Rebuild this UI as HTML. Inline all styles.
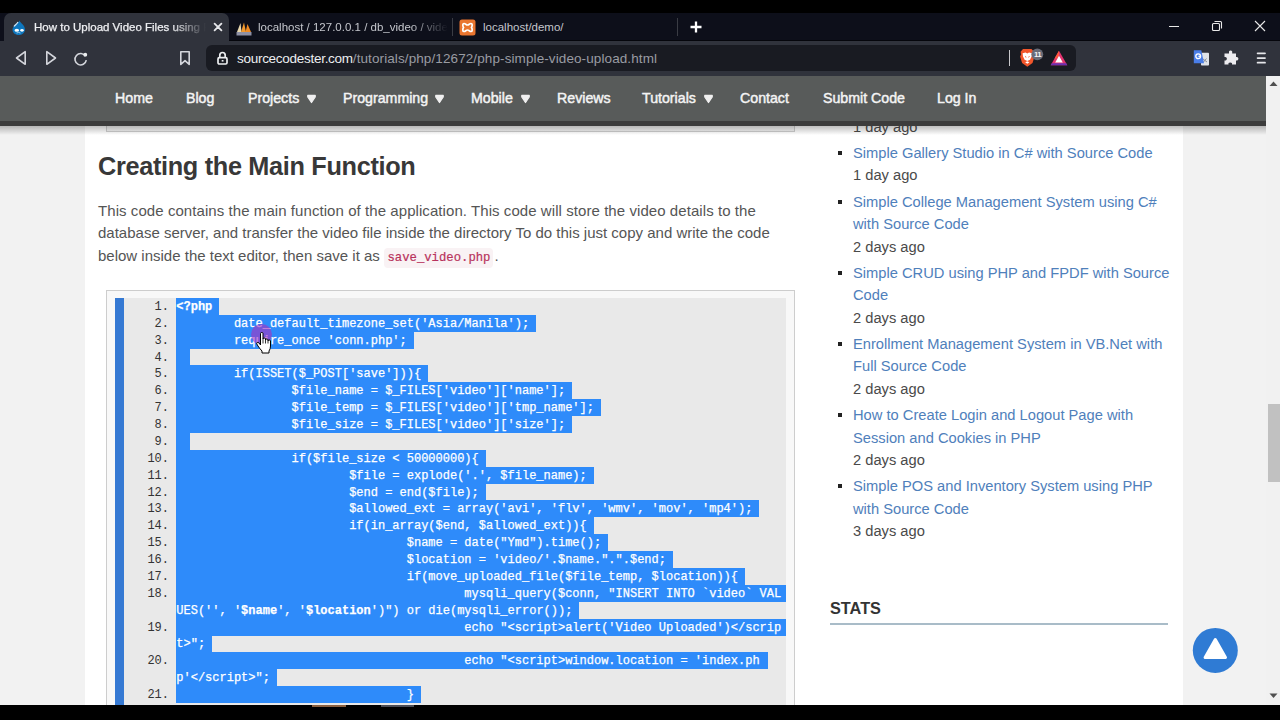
<!DOCTYPE html><html><head><meta charset="utf-8"><style>
*{margin:0;padding:0;box-sizing:border-box}
html,body{width:1280px;height:720px;overflow:hidden;background:#f2f2f2;font-family:"Liberation Sans",sans-serif}
.a{position:absolute}
.tt{font-size:11.5px;color:#eeeff2;white-space:nowrap;line-height:14px}
.fade{-webkit-mask-image:linear-gradient(90deg,#000 80%,transparent);overflow:hidden}
.ni{top:89.3px;font-size:14.2px;font-weight:normal;-webkit-text-stroke:0.45px #f4f4f4;color:#f4f4f4;white-space:nowrap;line-height:18px}
.p{font-size:15px;color:#555;white-space:nowrap;line-height:22px;left:98px}
.cl{position:absolute;left:176px;height:17px;white-space:pre;font-family:"Liberation Mono",monospace;font-size:12px;line-height:17px;color:#fff}
.cl span.h{background:#2e8bfa;display:inline-block;height:17px;padding-top:1px;vertical-align:top;-webkit-text-stroke:0.25px #fff;text-indent:0.3px}
.ln{position:absolute;left:122px;width:47px;text-align:right;height:17px;padding-top:1px;font-family:"Liberation Mono",monospace;font-size:12px;line-height:17px;color:#333}
.sl{position:absolute;left:853px;font-size:14.7px;line-height:20px;white-space:nowrap;color:#4f80bb}
.sd{position:absolute;left:853px;font-size:14.7px;line-height:20px;white-space:nowrap;color:#4a4a4a}
.bu{position:absolute;left:838px;width:4px;height:4px;background:#222}
</style></head><body>
<div class="a" style="left:0;top:0;width:1280px;height:13px;background:#000"></div>
<div class="a" style="left:0;top:13px;width:1280px;height:28px;background:#0d0f1a"></div>
<div class="a" style="left:4px;top:13px;width:225px;height:28px;background:#30333c;border-radius:7px 7px 0 0"></div>
<div class="a" style="left:0;top:41px;width:1280px;height:35px;background:#30333c"></div>
<div class="a" style="left:229px;top:40px;width:1051px;height:1px;background:#05060c"></div>
<div class="a" style="left:206px;top:45px;width:870px;height:26px;background:#191b22;border-radius:6px"></div>
<div class="a" style="left:452px;top:18px;width:1px;height:18px;background:#3a3c44"></div>
<div class="a" style="left:677px;top:18px;width:1px;height:18px;background:#3a3c44"></div>
<div class="a tt fade" style="left:34px;top:20px;width:172px;-webkit-text-stroke:0.25px #eeeff2">How to Upload Video Files using PHP</div>
<div class="a tt fade" style="left:258px;top:20px;color:#c4c6cc;width:190px">localhost / 127.0.0.1 / db_video / video</div>
<div class="a tt" style="left:483px;top:20px;color:#c4c6cc">localhost/demo/</div>
<div class="a" style="left:237px;top:51px;font-size:13.5px;color:#9a9ca2;white-space:nowrap;line-height:16px"><span style="color:#eceef0;letter-spacing:-0.28px">sourcecodester.com</span><span style="letter-spacing:0.1px">/tutorials/php/12672/php-simple-video-upload.html</span></div>
<svg class="a" style="left:10px;top:19px" width="18" height="18" viewBox="0 0 18 18"><path d="M9.5 1.5 C10 4 15 6 15 10.5 C15 14 12 16 8.5 16 C5 16 2.5 13.5 2.5 10.5 C2.5 6.5 8 5.5 9.5 1.5 Z" fill="#0d76bd"/><path d="M8 3 C7 5 5 6 4 7.5" stroke="#cfe6f7" stroke-width="1.3" fill="none"/><ellipse cx="6.8" cy="11.3" rx="2.3" ry="1.5" fill="#fff"/><ellipse cx="12" cy="11.3" rx="1.8" ry="1.4" fill="#fff"/><path d="M6.5 14 Q8.5 13 10.5 14" stroke="#9ccbeb" stroke-width="1" fill="none"/></svg>
<svg class="a" style="left:213px;top:22px" width="10" height="10" viewBox="0 0 10 10"><path d="M1.6 1.6 L8.4 8.4 M8.4 1.6 L1.6 8.4" stroke="#e6e7ea" stroke-width="1.8" stroke-linecap="round"/></svg>
<svg class="a" style="left:235px;top:19px" width="18" height="18" viewBox="0 0 18 18"><path d="M2 13 L5.5 4 L6.5 13 Z" fill="#e9d9b0"/><path d="M6 13 L9 3.5 L11 13 Z" fill="#f39a2e"/><path d="M10.5 13 L12.5 5 L16 13 Z" fill="#f08a22"/><rect x="1.5" y="13" width="15" height="3.5" fill="#8d90a6"/></svg>
<svg class="a" style="left:459px;top:19px" width="17" height="17" viewBox="0 0 17 17"><rect x="0.5" y="0.5" width="16" height="16" rx="2.5" fill="#e9752f"/><path d="M5 4.5 C6.5 4.5 7 6 8.5 6 C10 6 10.5 4.5 12 4.5 C13.5 4.5 13.5 7 12.5 8.5 C13.5 10 13.5 12.5 12 12.5 C10.5 12.5 10 11 8.5 11 C7 11 6.5 12.5 5 12.5 C3.5 12.5 3.5 10 4.5 8.5 C3.5 7 3.5 4.5 5 4.5 Z" fill="none" stroke="#fff" stroke-width="1.7"/></svg>
<svg class="a" style="left:689px;top:20px" width="14" height="14" viewBox="0 0 14 14"><path d="M7 1.5 V12.5 M1.5 7 H12.5" stroke="#fff" stroke-width="2.3"/></svg>
<div class="a" style="left:1169px;top:26px;width:10px;height:1px;background:#e8e8e8"></div>
<svg class="a" style="left:1211px;top:20px" width="12" height="12" viewBox="0 0 12 12"><rect x="1.5" y="3.5" width="7" height="7" rx="1" fill="none" stroke="#e8e8e8" stroke-width="1.1"/><path d="M3.5 1.5 H9.5 Q10.5 1.5 10.5 2.5 V8.5" fill="none" stroke="#e8e8e8" stroke-width="1.1"/></svg>
<svg class="a" style="left:1254px;top:20px" width="12" height="12" viewBox="0 0 12 12"><path d="M1 1 L11 11 M11 1 L1 11" stroke="#e8e8e8" stroke-width="1.1"/></svg>
<svg class="a" style="left:14px;top:49px" width="14" height="18" viewBox="0 0 14 18"><path d="M2.5 9 L11.2 2.7 V15.3 Z" fill="none" stroke="#d4d6dc" stroke-width="1.6" stroke-linejoin="round"/></svg>
<svg class="a" style="left:44px;top:49px" width="14" height="18" viewBox="0 0 14 18"><path d="M11.5 9 L2.8 2.7 V15.3 Z" fill="none" stroke="#d4d6dc" stroke-width="1.6" stroke-linejoin="round"/></svg>
<svg class="a" style="left:72px;top:50px" width="17" height="17" viewBox="0 0 17 17"><path d="M13.5 6.2 A5.7 5.7 0 1 0 14.3 10.2" fill="none" stroke="#d4d6dc" stroke-width="1.6"/><circle cx="13.3" cy="4.7" r="1.9" fill="#eceef0"/></svg>
<svg class="a" style="left:178px;top:49px" width="14" height="18" viewBox="0 0 14 18"><path d="M2.8 2.8 H11.2 V15.4 L7 11.6 L2.8 15.4 Z" fill="none" stroke="#d4d6dc" stroke-width="1.6" stroke-linejoin="round"/></svg>
<svg class="a" style="left:216px;top:50px" width="13" height="16" viewBox="0 0 13 16"><path d="M3.8 7.5 V5.2 A2.7 2.7 0 0 1 9.2 5.2 V7.5" fill="none" stroke="#eceef0" stroke-width="1.7"/><rect x="2" y="7.6" width="9" height="6.4" rx="1.3" fill="none" stroke="#eceef0" stroke-width="1.7"/><rect x="5.7" y="10" width="1.8" height="1.6" fill="#eceef0"/></svg>
<div class="a" style="left:1009px;top:50px;width:1px;height:16px;background:#c8c8cc"></div>
<svg class="a" style="left:1019px;top:48px" width="17" height="20" viewBox="0 0 17 20"><path d="M4 1 H12.5 L15 3.8 L14.6 6.5 L15.5 8.5 L13.5 15 L8.3 18.8 L3.1 15 L1.1 8.5 L2 6.5 L1.6 3.8 Z" fill="#f1562b"/><path d="M3.6 5.2 L6.6 4.6 L8.3 5.6 L10 4.6 L13 5.2 L12.6 8.6 L11 11.8 L8.3 13 L5.6 11.8 L4 8.6 Z" fill="#fff"/><path d="M6.2 14.2 L8.3 13.2 L10.4 14.2 L8.3 15.8 Z" fill="#fff"/><path d="M6 8.5 L7.3 9.2 M10.6 8.5 L9.3 9.2" stroke="#f1562b" stroke-width="0.9"/></svg>
<svg class="a" style="left:1031px;top:48px" width="13" height="13" viewBox="0 0 13 13"><circle cx="6.3" cy="6.3" r="5.9" fill="#6a6c78"/><text x="6.5" y="9" font-family="Liberation Sans" font-size="7.8" font-weight="bold" fill="#f4f4f4" text-anchor="middle" letter-spacing="-0.6">11</text></svg>
<svg class="a" style="left:1050px;top:50px" width="18" height="16" viewBox="0 0 18 16"><path d="M9 0.8 L17.3 15.2 H0.7 Z" fill="#e2336f"/><path d="M9 0.8 L4.5 8.6 L7 8.6 L9 5.2 Z" fill="#ff5a3c"/><path d="M9 5.8 L12.8 12.5 H5.2 Z" fill="#fff"/><path d="M0.7 15.2 H17.3 L16.2 13.3 H1.8 Z" fill="#6a2fb0"/></svg>
<svg class="a" style="left:1192px;top:49px" width="18" height="18" viewBox="0 0 18 18"><rect x="9" y="3.8" width="8" height="12.8" rx="0.8" fill="#dfe3e8"/><path d="M11 10 L15 13 M11.5 13 L14.5 9.5" stroke="#8a9099" stroke-width="1"/><path d="M1.8 1.2 H9.3 L12 14.3 H1.8 Z" fill="#4a7ee8"/><circle cx="6.2" cy="7.3" r="2.4" fill="none" stroke="#fff" stroke-width="1.3"/><path d="M6.4 7.3 H8.6" stroke="#fff" stroke-width="1.2"/></svg>
<svg class="a" style="left:1223px;top:50px" width="16" height="16" viewBox="0 0 16 16"><path d="M6 1.5 A1.8 1.8 0 0 1 9.2 1.5 V3.5 H13 V7 A1.8 1.8 0 1 1 13 10.4 V14.6 H9 A1.8 1.8 0 1 0 5.5 14.6 H1.5 V10.4 A1.8 1.8 0 1 0 1.5 7 V3.5 H6 Z" fill="#ececef"/></svg>
<svg class="a" style="left:1255px;top:51px" width="12" height="14" viewBox="0 0 12 14"><path d="M2.6 2.3 H10 M2.6 7.1 H10 M2.6 11.7 H10" stroke="#e6e7ea" stroke-width="1.8" stroke-linecap="round"/></svg>
<div class="a" style="left:85px;top:125px;width:1098px;height:580px;background:#fff"></div>
<div class="a" style="left:106px;top:120px;width:689px;height:12px;border:1px solid #cfcfcf;border-top:none;background:#f5f5f5"></div>
<div class="sd" style="top:117px">1 day ago</div>
<div class="a" style="left:0;top:76px;width:1266px;height:45px;background:#585b5a"></div>
<div class="a" style="left:0;top:121px;width:1266px;height:5px;background:#3c3c3c"></div>
<div class="a" style="left:0;top:126px;width:1266px;height:9px;background:linear-gradient(rgba(0,0,0,.25),rgba(0,0,0,0))"></div>
<div class="a ni" style="left:115px">Home</div>
<div class="a ni" style="left:186px">Blog</div>
<div class="a ni" style="left:248px">Projects</div>
<svg class="a" style="left:306px;top:93px" width="11" height="11" viewBox="0 0 11 11"><path d="M1.8 2.5 L9.2 2.5 L9.2 4 L5.5 9.5 L1.8 4 Z" fill="#f0f0f0" stroke="#f0f0f0" stroke-width="1.3" stroke-linejoin="round"/></svg>
<div class="a ni" style="left:343px">Programming</div>
<svg class="a" style="left:434px;top:93px" width="11" height="11" viewBox="0 0 11 11"><path d="M1.8 2.5 L9.2 2.5 L9.2 4 L5.5 9.5 L1.8 4 Z" fill="#f0f0f0" stroke="#f0f0f0" stroke-width="1.3" stroke-linejoin="round"/></svg>
<div class="a ni" style="left:471px">Mobile</div>
<svg class="a" style="left:520px;top:93px" width="11" height="11" viewBox="0 0 11 11"><path d="M1.8 2.5 L9.2 2.5 L9.2 4 L5.5 9.5 L1.8 4 Z" fill="#f0f0f0" stroke="#f0f0f0" stroke-width="1.3" stroke-linejoin="round"/></svg>
<div class="a ni" style="left:557px">Reviews</div>
<div class="a ni" style="left:642px">Tutorials</div>
<svg class="a" style="left:703px;top:93px" width="11" height="11" viewBox="0 0 11 11"><path d="M1.8 2.5 L9.2 2.5 L9.2 4 L5.5 9.5 L1.8 4 Z" fill="#f0f0f0" stroke="#f0f0f0" stroke-width="1.3" stroke-linejoin="round"/></svg>
<div class="a ni" style="left:740px">Contact</div>
<div class="a ni" style="left:823px">Submit Code</div>
<div class="a ni" style="left:937px">Log In</div>
<div class="a" style="left:98px;top:151px;font-size:25.3px;font-weight:bold;letter-spacing:-0.33px;color:#383838;white-space:nowrap;line-height:30px">Creating the Main Function</div>
<div class="a p" style="top:200px;letter-spacing:0.068px">This code contains the main function of the application. This code will store the video details to the</div>
<div class="a p" style="top:222px">database server, and transfer the video file inside the directory To do this just copy and write the code</div>
<div class="a p" style="top:245px">below inside the text editor, then save it as <span style="font-family:'Liberation Mono',monospace;font-size:12.25px;color:#b8325c;background:#f9f2f4;padding:3px 3px 3px 3.5px;border-radius:4px;-webkit-text-stroke:0.2px #b8325c">save_video.php</span><span style="margin-left:1px">.</span></div>
<div class="a" style="left:106px;top:290px;width:689px;height:430px;border:1px solid #cdcdcd;background:#f8f8f8"></div>
<div class="a" style="left:115px;top:298px;width:9px;height:420px;background:#3579d3"></div>
<div class="a" style="left:124px;top:298px;width:662px;height:420px;background:#e9e9e9"></div>
<div class="ln" style="top:298.00px">1.</div>
<div class="cl" style="top:298.00px"><span class="h" style="width:43.2px"><b>&lt;?php</b></span></div>
<div class="ln" style="top:314.87px">2.</div>
<div class="cl" style="top:314.87px"><span class="h" style="width:360.0px">        date_default_timezone_set('Asia/Manila');</span></div>
<div class="ln" style="top:331.74px">3.</div>
<div class="cl" style="top:331.74px"><span class="h" style="width:237.6px">        require_once 'conn.php';</span></div>
<div class="ln" style="top:348.61px">4.</div>
<div class="cl" style="top:348.61px"><span class="h" style="width:14.0px"></span></div>
<div class="ln" style="top:365.48px">5.</div>
<div class="cl" style="top:365.48px"><span class="h" style="width:252.0px">        if(ISSET($_POST['save'])){</span></div>
<div class="ln" style="top:382.35px">6.</div>
<div class="cl" style="top:382.35px"><span class="h" style="width:396.0px">                $file_name = $_FILES['video']['name'];</span></div>
<div class="ln" style="top:399.22px">7.</div>
<div class="cl" style="top:399.22px"><span class="h" style="width:424.8px">                $file_temp = $_FILES['video']['tmp_name'];</span></div>
<div class="ln" style="top:416.09px">8.</div>
<div class="cl" style="top:416.09px"><span class="h" style="width:396.0px">                $file_size = $_FILES['video']['size'];</span></div>
<div class="ln" style="top:432.96px">9.</div>
<div class="cl" style="top:432.96px"><span class="h" style="width:14.0px"></span></div>
<div class="ln" style="top:449.83px">10.</div>
<div class="cl" style="top:449.83px"><span class="h" style="width:309.6px">                if($file_size &lt; 50000000){</span></div>
<div class="ln" style="top:466.70px">11.</div>
<div class="cl" style="top:466.70px"><span class="h" style="width:417.6px">                        $file = explode('.', $file_name);</span></div>
<div class="ln" style="top:483.57px">12.</div>
<div class="cl" style="top:483.57px"><span class="h" style="width:309.6px">                        $end = end($file);</span></div>
<div class="ln" style="top:500.44px">13.</div>
<div class="cl" style="top:500.44px"><span class="h" style="width:583.2px">                        $allowed_ext = array('avi', 'flv', 'wmv', 'mov', 'mp4');</span></div>
<div class="ln" style="top:517.31px">14.</div>
<div class="cl" style="top:517.31px"><span class="h" style="width:417.6px">                        if(in_array($end, $allowed_ext)){</span></div>
<div class="ln" style="top:534.18px">15.</div>
<div class="cl" style="top:534.18px"><span class="h" style="width:432.0px">                                $name = date("Ymd").time();</span></div>
<div class="ln" style="top:551.05px">16.</div>
<div class="cl" style="top:551.05px"><span class="h" style="width:496.8px">                                $location = 'video/'.$name.".".$end;</span></div>
<div class="ln" style="top:567.92px">17.</div>
<div class="cl" style="top:567.92px"><span class="h" style="width:568.8px">                                if(move_uploaded_file($file_temp, $location)){</span></div>
<div class="ln" style="top:584.79px">18.</div>
<div class="cl" style="top:584.79px"><span class="h" style="width:610.0px">                                        mysqli_query($conn, "INSERT INTO `video` VAL</span></div>
<div class="cl" style="top:601.66px"><span class="h" style="width:403.2px">UES('', '<b>$name</b>', '<b>$location</b>')") or die(mysqli_error());</span></div>
<div class="ln" style="top:618.53px">19.</div>
<div class="cl" style="top:618.53px"><span class="h" style="width:610.0px">                                        echo "&lt;script&gt;alert('Video Uploaded')&lt;/scrip</span></div>
<div class="cl" style="top:635.40px"><span class="h" style="width:36.0px">t&gt;";</span></div>
<div class="ln" style="top:652.27px">20.</div>
<div class="cl" style="top:652.27px"><span class="h" style="width:592.0px">                                        echo "&lt;script&gt;window.location = 'index.ph</span></div>
<div class="cl" style="top:669.14px"><span class="h" style="width:100.8px">p'&lt;/script&gt;";</span></div>
<div class="ln" style="top:686.01px">21.</div>
<div class="cl" style="top:686.01px"><span class="h" style="width:244.8px">                                }</span></div>
<div class="a" style="left:251px;top:324px;width:21px;height:21px;border-radius:50%;background:rgba(170,50,190,0.6)"></div>
<svg class="a" style="left:255.5px;top:332px" width="17" height="23" viewBox="0 0 17 23"><path d="M4.5 1.5 Q4.5 0.5 5.75 0.5 Q7 0.5 7 1.5 V7 Q7 6 8.25 6 Q9.5 6 9.5 7 V8 Q9.5 7 10.75 7 Q12 7 12 8 V9 Q12 8 13.25 8 Q14.5 8 14.5 9 V14 Q14.5 17 13 19 V21 H6 V19 Q4 17 2 14 L0.8 12 Q0.3 11 1.2 10.5 Q2 10 3 11 L4.5 13 Z" fill="#fff" stroke="#000" stroke-width="1" stroke-linejoin="round"/><path d="M7 7 V11.5 M9.5 8 V11.5 M12 9 V11.5" stroke="#000" stroke-width="0.8"/></svg>
<div class="bu" style="top:150.8px"></div>
<div class="sl" style="top:142.8px">Simple Gallery Studio in C# with Source Code</div>
<div class="sd" style="top:165.3px">1 day ago</div>
<div class="bu" style="top:199.5px"></div>
<div class="sl" style="top:191.5px">Simple College Management System using C#</div>
<div class="sl" style="top:214.0px">with Source Code</div>
<div class="sd" style="top:236.5px">2 days ago</div>
<div class="bu" style="top:270.7px"></div>
<div class="sl" style="top:262.7px">Simple CRUD using PHP and FPDF with Source</div>
<div class="sl" style="top:285.2px">Code</div>
<div class="sd" style="top:307.7px">2 days ago</div>
<div class="bu" style="top:341.9px"></div>
<div class="sl" style="top:333.9px">Enrollment Management System in VB.Net with</div>
<div class="sl" style="top:356.4px">Full Source Code</div>
<div class="sd" style="top:378.9px">2 days ago</div>
<div class="bu" style="top:413.1px"></div>
<div class="sl" style="top:405.1px">How to Create Login and Logout Page with</div>
<div class="sl" style="top:427.6px">Session and Cookies in PHP</div>
<div class="sd" style="top:450.1px">2 days ago</div>
<div class="bu" style="top:484.3px"></div>
<div class="sl" style="top:476.3px">Simple POS and Inventory System using PHP</div>
<div class="sl" style="top:498.8px">with Source Code</div>
<div class="sd" style="top:521.3px">3 days ago</div>
<div class="a" style="left:830px;top:598px;font-size:16.3px;font-weight:bold;color:#333;line-height:20px">STATS</div>
<div class="a" style="left:830px;top:623px;width:338px;height:2px;background:#a9bcc8"></div>
<svg class="a" style="left:1192px;top:627px" width="47" height="47" viewBox="0 0 47 47"><circle cx="23.3" cy="23.4" r="22.5" fill="#2f7bd4"/><path d="M23.3 12.5 L33.5 30.5 L13.1 30.5 Z" fill="#fff" stroke="#fff" stroke-width="3" stroke-linejoin="round"/></svg>
<div class="a" style="left:1266px;top:76px;width:14px;height:629px;background:#f1f1f1"></div>
<div class="a" style="left:1268px;top:404px;width:12px;height:78px;background:#c1c1c1"></div>
<svg class="a" style="left:1269px;top:81px" width="9" height="6"><path d="M0.5 5 L4.5 0.5 L8.5 5 Z" fill="#505050"/></svg>
<svg class="a" style="left:1269px;top:693px" width="9" height="6"><path d="M0.5 0.5 L8.5 0.5 L4.5 5 Z" fill="#505050"/></svg>
<div class="a" style="left:0;top:705px;width:1280px;height:15px;background:#000"></div>
<div class="a" style="left:312px;top:705px;width:34px;height:2px;background:#8a6040"></div>
<div class="a" style="left:381px;top:705px;width:33px;height:2px;background:#4a4c55"></div>
</body></html>
